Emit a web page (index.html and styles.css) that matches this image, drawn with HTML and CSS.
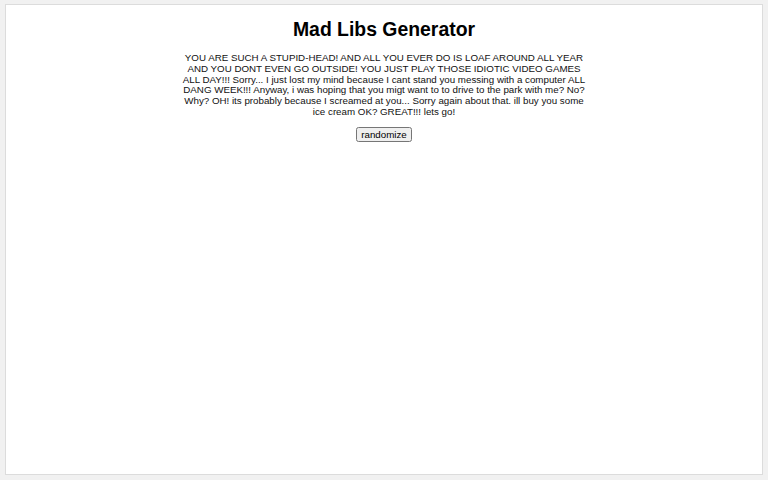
FILE: index.html
```html
<!DOCTYPE html>
<html lang="en">
<head>
    <meta charset="UTF-8">
    <meta name="viewport" content="width=device-width, initial-scale=1.0">
    <title>Mad Libs Generator</title>
    <link rel="stylesheet" href="styles.css">
</head>
<body>

<!-- Story card -->
<div class="card">
    <h1>Mad Libs Generator</h1>

    <p id="story" class="story">YOU ARE SUCH A STUPID-HEAD! AND ALL YOU EVER DO IS LOAF AROUND ALL YEAR AND YOU DONT EVEN GO OUTSIDE! YOU JUST PLAY THOSE IDIOTIC VIDEO GAMES ALL DAY!!! Sorry... I just lost my mind because I cant stand you messing with a computer ALL DANG WEEK!!! Anyway, i was hoping that you migt want to to drive to the park with me? No? Why? OH! its probably because I screamed at you... Sorry again about that. ill buy you some ice cream OK? GREAT!!! lets go!</p>

    <button type="button" class="btn">randomize</button>
</div>

</body>
</html>
```

FILE: styles.css
```css
html {
    background-color: #f1f1f1;
}
body {
    font-family: "Liberation Sans", Arial, sans-serif;
    margin: 4px 5px 5px 5px;
}
.card {
    background-color: #fff;
    border: 1px solid #dcdcdc;
    box-sizing: border-box;
    height: 471px;
    text-align: center;
}
h1 {
    font-size: 19.4px;
    margin: 13px 0 0 0;
    line-height: 23px;
}
.story {
    width: 406px;
    margin: 12px auto 6px auto;
    font-size: 9.75px;
    line-height: 10.8px;
    color: #111;
}
.btn {
    font-family: "Liberation Sans", Arial, sans-serif;
    font-size: 9.75px;
    padding: 0 3px;
}
```
